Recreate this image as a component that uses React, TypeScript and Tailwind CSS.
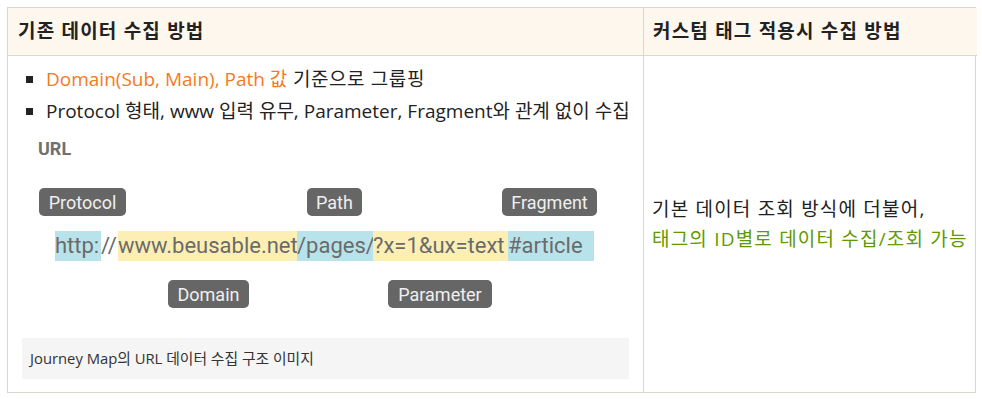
import React from 'react';

const font = { fontFamily: '"Open Sans", "Noto Sans CJK KR", sans-serif' };

const Tag = ({ label, width }: { label: string; width: string }) => (
  <div
    className={`h-[28px] ${width} flex items-center justify-center rounded-[5px] bg-[#666666] text-[18px] text-[#efefef]`}
  >
    {label}
  </div>
);

const UrlDiagram = () => (
  <div className="font-['Roboto',sans-serif] text-[#6b6b6b]">
    <div className="ml-[30px] mt-[12px] h-[20px] text-[18px] font-bold leading-[20px] text-[#707070]">URL</div>
    <div className="mt-[29px] flex h-[28px]">
      <div className="ml-[31px]"><Tag label="Protocol" width="w-[87px]" /></div>
      <div className="ml-[181px]"><Tag label="Path" width="w-[55px]" /></div>
      <div className="ml-[140px]"><Tag label="Fragment" width="w-[95px]" /></div>
    </div>
    <div className="ml-[47px] mt-[15px] flex h-[30px] items-center whitespace-nowrap text-[22px] leading-[30px]">
      <span className="w-[46px] bg-[#b8e3ea]">http:</span>
      <span className="w-[17px]">//</span>
      <span className="w-[179px] bg-[#fdefb3]">www.beusable.net</span>
      <span className="w-[76px] bg-[#b8e3ea]">/pages/</span>
      <span className="w-[135px] bg-[#fdefb3]">?x=1&amp;ux=text</span>
      <span className="w-[86px] bg-[#b8e3ea]">#article</span>
    </div>
    <div className="mt-[19px] flex h-[28px]">
      <div className="ml-[160px]"><Tag label="Domain" width="w-[81px]" /></div>
      <div className="ml-[139px]"><Tag label="Parameter" width="w-[104px]" /></div>
    </div>
  </div>
);

export default function App() {
  return (
    <div className="min-h-screen bg-white pl-[7px] pt-[7px]" style={font}>
      <div className="grid w-[969px] grid-cols-[636px_333px] border border-[#dcd6d0] text-[#222]">
        <div className="flex h-[48px] items-center border-b border-r border-[#dcd6d0] bg-[#fef7ee] pl-[10px] text-[19px] font-bold tracking-[1.2px]">
          기존 데이터 수집 방법
        </div>
        <div className="flex h-[48px] items-center border-b border-[#dcd6d0] bg-[#fef7ee] pl-[9px] text-[19px] font-bold tracking-[1.2px]">
          커스텀 태그 적용시 수집 방법
        </div>

        <div className="h-[336px] border-r border-[#dcd6d0] pt-[7px]">
          <ul className="text-[19px] leading-[32px]">
            <li className="flex items-center whitespace-nowrap">
              <span className="ml-[18px] mr-[13px] h-[7px] w-[7px] bg-[#222]" />
              <span className="text-[#f47a1f]">Domain(Sub, Main), Path 값</span>
              <span className="tracking-[0.6px]">&nbsp;기준으로 그룹핑</span>
            </li>
            <li className="flex items-center whitespace-nowrap">
              <span className="ml-[18px] mr-[13px] h-[7px] w-[7px] bg-[#222]" />
              <span>Protocol 형태, www 입력 유무, Parameter, Fragment와 관계 없이 수집</span>
            </li>
          </ul>
          <UrlDiagram />
          <div className="ml-[14px] mt-[30px] flex h-[41px] w-[607px] items-center bg-[#f5f5f5] pl-[8px] text-[14.8px] text-[#333]">
            Journey Map의 URL 데이터 수집 구조 이미지
          </div>
        </div>

        <div className="flex h-[336px] flex-col justify-center pl-[8px] text-[19px] leading-[30px] tracking-[1.2px]">
          <div>기본 데이터 조회 방식에 더불어,</div>
          <div className="text-[#5e9a00]">태그의 ID별로 데이터 수집/조회 가능</div>
        </div>
      </div>
    </div>
  );
}
